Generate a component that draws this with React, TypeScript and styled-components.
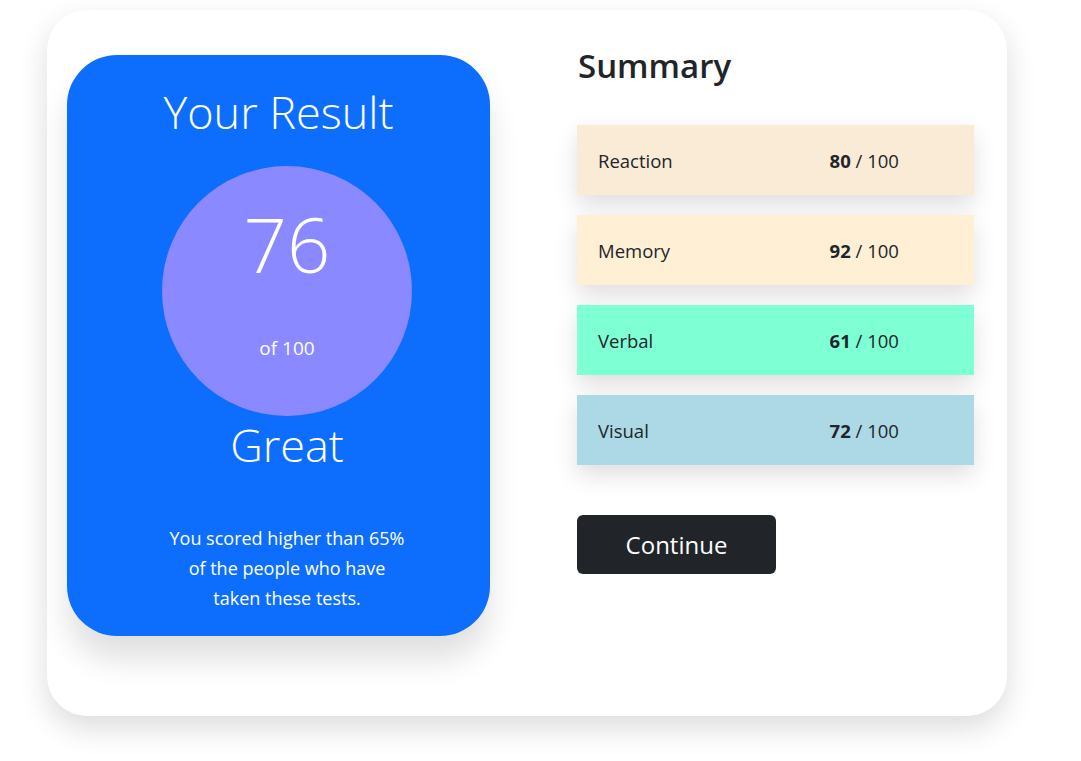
import styled, { createGlobalStyle } from "styled-components";

const GlobalStyle = createGlobalStyle`
  body {
    margin: 0;
    background: #ffffff;
    font-family: "Open Sans", "Noto Sans", sans-serif;
    color: #212529;
  }
`;

const Page = styled.div`
  padding: 10px 0 45px 47px;
`;

const Card = styled.div`
  width: 960px;
  box-sizing: border-box;
  padding: 33px 20px 80px 20px;
  border-radius: 40px;
  background: #ffffff;
  box-shadow: 0 12px 30px rgba(0, 0, 0, 0.14);
  display: flex;
  align-items: flex-start;
  gap: 87px;
`;

const ResultPanel = styled.div`
  width: 423px;
  height: 581px;
  margin-top: 12px;
  box-sizing: border-box;
  padding-top: 28px;
  border-radius: 50px;
  background: #0d6efd;
  color: #ffffff;
  box-shadow: 0 24px 30px rgba(0, 0, 0, 0.12);
  display: flex;
  flex-direction: column;
  align-items: center;
`;

const ResultTitle = styled.h1`
  margin: 0;
  font-size: 45px;
  font-weight: 300;
  line-height: 58px;
`;

const ResultBody = styled.div`
  padding-left: 17px;
  margin-top: 25px;
  display: flex;
  flex-direction: column;
  align-items: center;
`;

const Circle = styled.div`
  width: 250px;
  height: 250px;
  border-radius: 50%;
  background: #8a89ff;
  display: flex;
  flex-direction: column;
  align-items: center;
`;

const Score = styled.span`
  margin-top: 36px;
  font-size: 76px;
  font-weight: 300;
  line-height: 84px;
`;

const OutOf = styled.span`
  margin-top: 50px;
  font-size: 19px;
  line-height: 24px;
`;

const Verdict = styled.h2`
  margin: 0;
  font-size: 45px;
  font-weight: 300;
  line-height: 58px;
`;

const Blurb = styled.p`
  margin: 49px 0 0;
  width: 240px;
  text-align: center;
  font-size: 18px;
  line-height: 30px;
`;

const SummaryColumn = styled.div`
  width: 397px;
  display: flex;
  flex-direction: column;
`;

const SummaryTitle = styled.h2`
  margin: 0 0 0 1px;
  font-size: 33px;
  font-weight: 600;
  line-height: 46px;
`;

const Rows = styled.div`
  margin-top: 36px;
  display: flex;
  flex-direction: column;
  gap: 20px;
`;

const Row = styled.div<{ $bg: string }>`
  height: 70px;
  box-sizing: border-box;
  padding: 0 21px;
  background: ${(p) => p.$bg};
  box-shadow: 0 10px 22px rgba(0, 0, 0, 0.13);
  display: grid;
  grid-template-columns: 1fr 1fr;
  align-items: center;
  font-size: 18.5px;
`;

const RowValue = styled.span`
  text-align: center;
  & b {
    font-weight: 700;
  }
`;

const ContinueButton = styled.button`
  margin-top: 50px;
  width: 199px;
  height: 59px;
  border: none;
  border-radius: 6px;
  background: #212529;
  color: #ffffff;
  font-family: inherit;
  font-size: 24px;
  cursor: pointer;
`;

const scores = [
  { name: "Reaction", value: 80, bg: "#faebd7" },
  { name: "Memory", value: 92, bg: "#ffefd5" },
  { name: "Verbal", value: 61, bg: "#7fffd4" },
  { name: "Visual", value: 72, bg: "#add8e6" },
];

export default function App() {
  return (
    <Page>
      <GlobalStyle />
      <Card>
        <ResultPanel>
          <ResultTitle>Your Result</ResultTitle>
          <ResultBody>
            <Circle>
              <Score>76</Score>
              <OutOf>of 100</OutOf>
            </Circle>
            <Verdict>Great</Verdict>
            <Blurb>You scored higher than 65% of the people who have taken these tests.</Blurb>
          </ResultBody>
        </ResultPanel>
        <SummaryColumn>
          <SummaryTitle>Summary</SummaryTitle>
          <Rows>
            {scores.map((s) => (
              <Row key={s.name} $bg={s.bg}>
                <span>{s.name}</span>
                <RowValue>
                  <b>{s.value}</b> / 100
                </RowValue>
              </Row>
            ))}
          </Rows>
          <ContinueButton>Continue</ContinueButton>
        </SummaryColumn>
      </Card>
    </Page>
  );
}
